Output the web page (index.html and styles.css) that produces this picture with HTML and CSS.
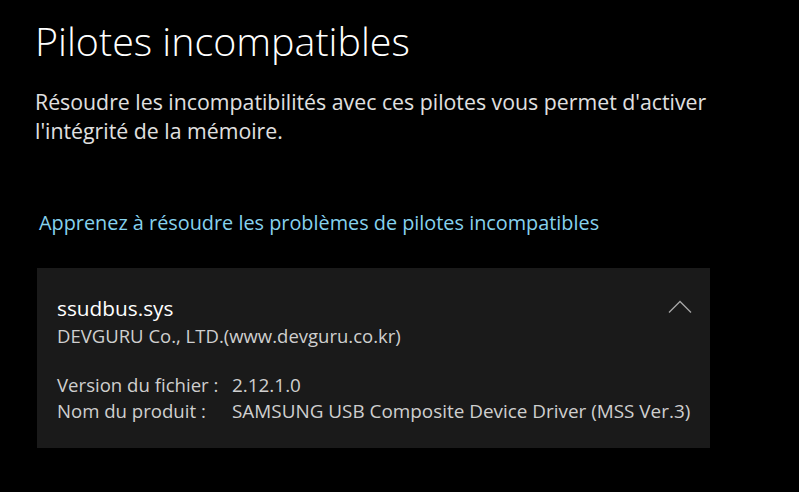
FILE: index.html
```html
<!DOCTYPE html>
<html lang="fr">
<head>
<meta charset="utf-8">
<title>Pilotes incompatibles</title>
<link rel="stylesheet" href="styles.css">
</head>
<body>
<main class="page">
  <h1 class="title">Pilotes incompatibles</h1>
  <p class="desc">Résoudre les incompatibilités avec ces pilotes vous permet d'activer l'intégrité de la mémoire.</p>
  <a class="link" href="#">Apprenez à résoudre les problèmes de pilotes incompatibles</a>
  <section class="card">
    <div class="card-head">
      <div class="card-names">
        <div class="driver">ssudbus.sys</div>
        <div class="vendor">DEVGURU Co., LTD.(www.devguru.co.kr)</div>
      </div>
      <svg class="chevron" width="24" height="13" viewBox="0 0 24 13" aria-hidden="true">
        <path d="M1 12.5 L12 1.5 L23 12.5" fill="none" stroke="#a6a6a6" stroke-width="1.3"/>
      </svg>
    </div>
    <dl class="details">
      <dt>Version du fichier :</dt><dd>2.12.1.0</dd>
      <dt>Nom du produit :</dt><dd>SAMSUNG USB Composite Device Driver (MSS Ver.3)</dd>
    </dl>
  </section>
</main>
</body>
</html>
```
FILE: styles.css
```css
html, body {
  margin: 0;
  padding: 0;
  background: #000;
}
body {
  font-family: "Open Sans", "Noto Sans", "Liberation Sans", sans-serif;
  color: #fff;
  width: 799px;
  height: 492px;
  overflow: hidden;
}
.page {
  padding: 17px 0 0 35px;
  display: flex;
  flex-direction: column;
  align-items: flex-start;
}
.title {
  margin: 0;
  font-weight: 300;
  font-size: 39.4px;
  line-height: 48px;
  color: #fff;
}
.desc {
  margin: 22px 0 0 0;
  width: 685px;
  font-size: 21.3px;
  line-height: 29px;
  color: #e0e0e0;
}
.link {
  margin: 66px 0 0 4px;
  font-size: 19.85px;
  line-height: 24px;
  color: #86d2ee;
  text-decoration: none;
}
.card {
  margin: 33px 0 0 2px;
  width: 673px;
  height: 180px;
  box-sizing: border-box;
  background: #1a1a1a;
  padding: 26px 18px 0 20px;
}
.card-head {
  display: flex;
  justify-content: space-between;
  align-items: flex-start;
}
.driver {
  font-size: 20.8px;
  line-height: 28px;
  color: #fff;
}
.vendor {
  font-size: 18.5px;
  line-height: 28px;
  color: #cfcfcf;
}
.chevron {
  margin-top: 6px;
}
.details {
  margin: 22px 0 0 0;
  display: grid;
  grid-template-columns: 175px auto;
  font-size: 18.6px;
  line-height: 26px;
  color: #cfcfcf;
}
.details dt,
.details dd {
  margin: 0;
}
.details dd {
  font-size: 18.9px;
}
```
